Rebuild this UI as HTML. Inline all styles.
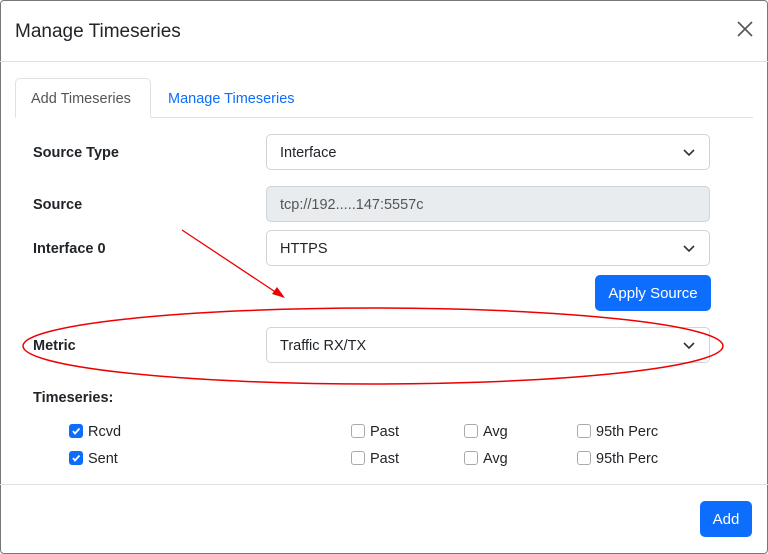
<!DOCTYPE html>
<html><head><style>
*{box-sizing:border-box;margin:0;padding:0}
body{width:768px;height:554px;background:#fff;font-family:"Liberation Sans",sans-serif;color:#212529;position:relative;overflow:hidden;font-size:14.5px}
.frame{position:absolute;inset:0;border:1px solid #777;border-radius:4px}
.a{position:absolute}
.sel{position:absolute;left:266px;width:444px;height:36px;border:1px solid #ced4da;border-radius:5px;padding:0 13px;line-height:36px;color:#212529}
.sel svg{position:absolute;right:14px;top:14px}
.lbl{position:absolute;left:33px;font-weight:bold}
.cb{position:absolute;width:14px;height:14px;border:1px solid #aaa;border-radius:3px}
.cb.on{background:#0d6efd;border-color:#0d6efd}
.t{position:absolute}
.btn{position:absolute;background:#0d6efd;color:#fff;border-radius:5px;text-align:center}
</style></head><body>
<div class="frame"></div>
<div class="t" style="left:15px;top:21px;font-size:19px">Manage Timeseries</div>
<svg class="a" style="left:737px;top:21px" width="16" height="16"><path d="M1 1L15 15M15 1L1 15" stroke="#555" stroke-width="1.6"/></svg>
<div class="a" style="left:0;top:61px;width:768px;height:1px;background:#dee2e6"></div>
<div class="a" style="left:15px;top:117px;width:738px;height:1px;background:#dee2e6"></div>
<div class="a" style="left:15px;top:78px;width:136px;height:40px;border:1px solid #dee2e6;border-bottom:1px solid #fff;border-radius:5px 5px 0 0;background:#fff"></div>
<div class="t" style="left:31px;top:91px;color:#555">Add Timeseries</div>
<div class="t" style="left:168px;top:91px;color:#0d6efd">Manage Timeseries</div>
<div class="lbl" style="top:145px">Source Type</div>
<div class="sel" style="top:134px">Interface<svg width="12" height="8"><path d="M1 1L6 6L11 1" stroke="#333" stroke-width="1.6" fill="none"/></svg></div>
<div class="lbl" style="top:197px">Source</div>
<div class="sel" style="top:186px;background:#e9ecef;color:#555">tcp://192.....147:5557c</div>
<div class="lbl" style="top:241px">Interface 0</div>
<div class="sel" style="top:230px">HTTPS<svg width="12" height="8"><path d="M1 1L6 6L11 1" stroke="#333" stroke-width="1.6" fill="none"/></svg></div>
<div class="btn" style="left:595px;top:275px;width:116px;height:36px;line-height:37px;font-size:15px">Apply Source</div>
<div class="lbl" style="top:338px">Metric</div>
<div class="sel" style="top:327px">Traffic RX/TX<svg width="12" height="8"><path d="M1 1L6 6L11 1" stroke="#333" stroke-width="1.6" fill="none"/></svg></div>
<svg class="a" style="left:0;top:0" width="768" height="554">
<ellipse cx="373" cy="346" rx="350" ry="38" fill="none" stroke="#e00" stroke-width="1.5"/>
<path d="M182 230L283 297" stroke="#e00" stroke-width="1.3"/>
<path d="M285 298L272 294L277 287Z" fill="#e00"/>
</svg>
<div class="lbl" style="top:390px">Timeseries:</div>
<div class="cb on" style="left:69px;top:424px"><svg width="12" height="12"><path d="M3 6L5 8.5L9.5 3.5" stroke="#fff" stroke-width="1.8" fill="none"/></svg></div>
<div class="t" style="left:88px;top:424px">Rcvd</div>
<div class="cb on" style="left:69px;top:451px"><svg width="12" height="12"><path d="M3 6L5 8.5L9.5 3.5" stroke="#fff" stroke-width="1.8" fill="none"/></svg></div>
<div class="t" style="left:88px;top:451px">Sent</div>
<div class="cb" style="left:351px;top:424px"></div><div class="t" style="left:370px;top:424px">Past</div>
<div class="cb" style="left:464px;top:424px"></div><div class="t" style="left:483px;top:424px">Avg</div>
<div class="cb" style="left:577px;top:424px"></div><div class="t" style="left:596px;top:424px">95th Perc</div>
<div class="cb" style="left:351px;top:451px"></div><div class="t" style="left:370px;top:451px">Past</div>
<div class="cb" style="left:464px;top:451px"></div><div class="t" style="left:483px;top:451px">Avg</div>
<div class="cb" style="left:577px;top:451px"></div><div class="t" style="left:596px;top:451px">95th Perc</div>
<div class="a" style="left:0;top:484px;width:768px;height:1px;background:#dee2e6"></div>
<div class="btn" style="left:700px;top:501px;width:52px;height:36px;line-height:37px;font-size:15px">Add</div>
</body></html>
